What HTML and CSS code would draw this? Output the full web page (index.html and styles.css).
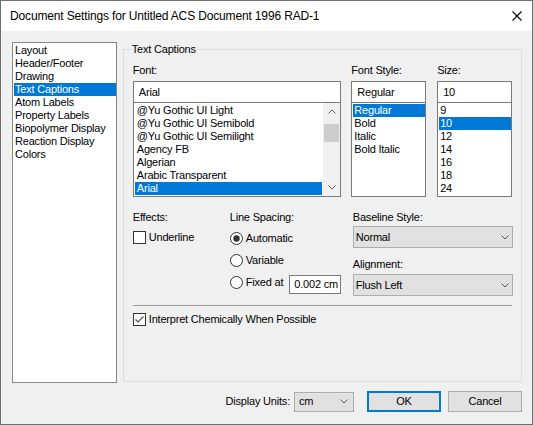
FILE: index.html
```html
<!DOCTYPE html>
<html lang="en">
<head>
<meta charset="UTF-8">
<title>Document Settings</title>
<link rel="stylesheet" href="styles.css">
</head>
<body>

<div class="window">
  <div class="titlebar">
    <span class="title">Document Settings for Untitled ACS Document 1996 RAD-1</span>
    <svg class="close" width="10" height="10" viewBox="0 0 10 10"><path d="M0.5 0.5L9.5 9.5M9.5 0.5L0.5 9.5" stroke="#000" stroke-width="1.1" fill="none"/></svg>
  </div>

  <div class="content">
    <div class="main">
      <ul class="pages">
        <li>Layout</li>
        <li>Header/Footer</li>
        <li>Drawing</li>
        <li class="selected">Text Captions</li>
        <li>Atom Labels</li>
        <li>Property Labels</li>
        <li>Biopolymer Display</li>
        <li>Reaction Display</li>
        <li>Colors</li>
      </ul>

      <fieldset class="group">
        <legend>Text Captions</legend>

        <div class="font-row">
          <div class="col-font">
            <div class="label">Font:</div>
            <div class="combo">
              <div class="combo-edit">Arial</div>
              <div class="combo-list">
                <ul class="items">
                  <li>@Yu Gothic UI Light</li>
                  <li>@Yu Gothic UI Semibold</li>
                  <li>@Yu Gothic UI Semilight</li>
                  <li>Agency FB</li>
                  <li>Algerian</li>
                  <li>Arabic Transparent</li>
                  <li class="selected">Arial</li>
                </ul>
                <div class="scrollbar">
                  <div class="sb-btn"><svg width="8" height="5" viewBox="0 0 8 5"><polyline points="0.5,4.5 4,1 7.5,4.5" stroke="#606060" fill="none"/></svg></div>
                  <div class="sb-track"><div class="sb-thumb"></div></div>
                  <div class="sb-btn"><svg width="8" height="5" viewBox="0 0 8 5"><polyline points="0.5,0.5 4,4 7.5,0.5" stroke="#606060" fill="none"/></svg></div>
                </div>
              </div>
            </div>
          </div>

          <div class="col-style">
            <div class="label">Font Style:</div>
            <div class="combo">
              <div class="combo-edit">Regular</div>
              <div class="combo-list">
                <ul class="items narrow">
                  <li class="selected">Regular</li>
                  <li>Bold</li>
                  <li>Italic</li>
                  <li>Bold Italic</li>
                </ul>
              </div>
            </div>
          </div>

          <div class="col-size">
            <div class="label">Size:</div>
            <div class="combo">
              <div class="combo-edit">10</div>
              <div class="combo-list">
                <ul class="items narrow">
                  <li>9</li>
                  <li class="selected">10</li>
                  <li>12</li>
                  <li>14</li>
                  <li>16</li>
                  <li>18</li>
                  <li>24</li>
                </ul>
              </div>
            </div>
          </div>
        </div>

        <div class="opts">
          <div class="opt-col">
            <div class="label">Effects:</div>
            <label class="check first">
              <svg width="13" height="13" viewBox="0 0 13 13"><rect x="0.5" y="0.5" width="12" height="12" fill="#fff" stroke="#333"/></svg>
              Underline
            </label>
          </div>

          <div class="opt-col">
            <div class="label">Line Spacing:</div>
            <div class="radios">
              <label class="radio">
                <svg width="13" height="13" viewBox="0 0 13 13"><circle cx="6.5" cy="6.5" r="6" fill="#fff" stroke="#333"/><circle cx="6.5" cy="6.5" r="3.2" fill="#333"/></svg>
                Automatic
              </label>
              <label class="radio">
                <svg width="13" height="13" viewBox="0 0 13 13"><circle cx="6.5" cy="6.5" r="6" fill="#fff" stroke="#333"/></svg>
                Variable
              </label>
              <label class="radio">
                <svg width="13" height="13" viewBox="0 0 13 13"><circle cx="6.5" cy="6.5" r="6" fill="#fff" stroke="#333"/></svg>
                Fixed at
                <span class="edit">0.002 cm</span>
              </label>
            </div>
          </div>

          <div class="opt-col">
            <div class="label">Baseline Style:</div>
            <div class="select wide">
              <span>Normal</span>
              <svg width="8" height="5" viewBox="0 0 8 5"><polyline points="0.5,0.5 4,4 7.5,0.5" stroke="#555" fill="none"/></svg>
            </div>
            <div class="label spaced">Alignment:</div>
            <div class="select wide tight">
              <span>Flush Left</span>
              <svg width="8" height="5" viewBox="0 0 8 5"><polyline points="0.5,0.5 4,4 7.5,0.5" stroke="#555" fill="none"/></svg>
            </div>
          </div>
        </div>

        <div class="separator"></div>

        <label class="check interpret">
          <svg width="13" height="13" viewBox="0 0 13 13"><rect x="0.5" y="0.5" width="12" height="12" fill="#fff" stroke="#333"/><polyline points="2.5,6.5 5,9 10.5,3.5" stroke="#555" stroke-width="1.2" fill="none"/></svg>
          Interpret Chemically When Possible
        </label>
      </fieldset>
    </div>

    <div class="footer">
      <span class="units-label">Display Units:</span>
      <div class="select units">
        <span>cm</span>
        <svg width="8" height="5" viewBox="0 0 8 5"><polyline points="0.5,0.5 4,4 7.5,0.5" stroke="#555" fill="none"/></svg>
      </div>
      <button type="button" class="btn default">OK</button>
      <button type="button" class="btn">Cancel</button>
    </div>
  </div>
</div>

</body>
</html>
```

FILE: styles.css
```css
* { box-sizing: border-box; }
body {
    margin: 0;
    font-family: "Liberation Sans", Arial, sans-serif;
    font-size: 11px;
    line-height: 13px;
    letter-spacing: -0.2px;
    color: #000;
}
ul { list-style: none; margin: 0; padding: 0; }
.window {
    width: 533px;
    height: 425px;
    border: 1px solid #707070;
    background: #f0f0f0;
}
.titlebar {
    height: 30px;
    background: #fff;
    display: flex;
    align-items: center;
    justify-content: space-between;
    padding: 0 10px 0 9px;
    font-size: 12px;
    letter-spacing: -0.15px;
}
.content { padding: 11px 10px 0 11px; }
.main {
    display: flex;
    height: 341px;
    gap: 6px;
}
.pages {
    width: 105px;
    height: 341px;
    background: #fff;
    border: 1px solid #828790;
    padding: 1px 0 0 1px;
}
.pages li { padding-left: 1px; height: 13px; white-space: nowrap; }
.selected { background: #0078d7; color: #fff; }

.group {
    width: 400px;
    height: 339px;
    margin: 1px 0 0;
    padding: 8px 9px 0;
    border: 1px solid #dcdcdc;
    min-width: 0;
}
.group legend {
    padding: 0 1px;
    margin-left: -2px;
    line-height: 13px;
}
.label { height: 13px; white-space: nowrap; }

.font-row { display: flex; }
.col-font { width: 209px; }
.col-style { width: 75px; margin-left: 10px; }
.col-size { width: 75px; margin-left: 11px; }
.combo {
    margin-top: 4px;
    border: 1px solid #7a7a7a;
    background: #fff;
}
.combo-edit {
    height: 21px;
    line-height: 20px;
    padding-left: 5px;
    border-bottom: 1px solid #7a7a7a;
}
.combo-list { display: flex; height: 93px; }
.items { flex: 1; padding: 1px; }
.items li { height: 13px; padding-left: 2px; white-space: nowrap; }
.items.narrow { padding: 1px 0 1px 1px; }
.items.narrow li { padding-left: 1px; }
.scrollbar {
    width: 17px;
    background: #f0f0f0;
    display: flex;
    flex-direction: column;
}
.sb-btn {
    height: 17px;
    display: flex;
    align-items: center;
    justify-content: center;
}
.sb-track { flex: 1; }
.sb-thumb {
    margin: 4px 1px 0;
    height: 18px;
    background: #cdcdcd;
}

.opts {
    display: grid;
    grid-template-columns: 97px 123px 160px;
    margin-top: 14px;
}
.opt-col { display: flex; flex-direction: column; }
.check, .radio {
    display: flex;
    align-items: center;
    gap: 3px;
    white-space: nowrap;
}
.check.first { margin-top: 7px; }
.radios { margin-top: 3px; }
.radio { height: 22px; }
.edit {
    margin-left: 3px;
    width: 52px;
    height: 19px;
    line-height: 17px;
    margin-top: 4px;
    padding-left: 4px;
    border: 1px solid #7a7a7a;
    background: #fff;
    overflow: hidden;
}
.select {
    display: flex;
    align-items: center;
    justify-content: space-between;
    border: 1px solid #adadad;
    background: #e1e1e1;
    white-space: nowrap;
}
.select.wide {
    height: 22px;
    margin-top: 2px;
    padding: 0 3px 0 2px;
}
.select.tight { margin-top: 3px; }
.label.spaced { margin-top: 10px; }
.separator {
    margin-top: 9px;
    height: 1px;
    background: #a0a0a0;
}
.check.interpret { margin-top: 7px; }

.footer {
    display: flex;
    justify-content: flex-end;
    align-items: center;
    margin-top: 8px;
    height: 21px;
}
.units-label { margin-right: 4px; }
.select.units {
    width: 60px;
    height: 20px;
    padding: 0 5px 0 4px;
}
.btn {
    width: 74px;
    height: 21px;
    margin-left: 7px;
    padding: 0;
    font: inherit;
    letter-spacing: inherit;
    color: #000;
    background: #e1e1e1;
    border: 1px solid #adadad;
}
.btn.default {
    margin-left: 13px;
    border: 2px solid #0078d7;
}
```
